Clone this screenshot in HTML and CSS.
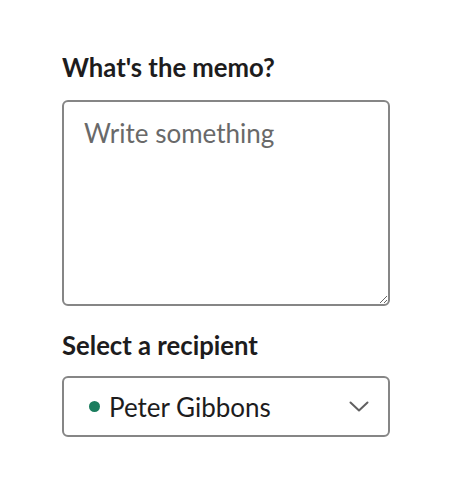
FILE: index.html
```html
<!DOCTYPE html>
<html lang="en">
<head>
<meta charset="utf-8">
<title>Memo</title>
<link rel="stylesheet" href="styles.css">
</head>
<body>
<main class="form">
  <label class="label" for="memo">What's the memo?</label>
  <textarea id="memo" class="memo" placeholder="Write something"></textarea>
  <div class="label label-second">Select a recipient</div>
  <div class="select">
    <span class="dot"></span>
    <span class="name">Peter Gibbons</span>
    <svg class="chevron" width="20" height="12" viewBox="0 0 20 12" aria-hidden="true"><path d="M1.5 1.5 L10 9.5 L18.5 1.5" fill="none" stroke="#616061" stroke-width="2" stroke-linecap="round" stroke-linejoin="round"/></svg>
  </div>
</main>
</body>
</html>
```

FILE: styles.css
```css
html, body {
  margin: 0;
  padding: 0;
  background: #ffffff;
}
body {
  font-family: Lato, "Noto Sans", sans-serif;
  color: #1d1c1d;
}
.form {
  display: flex;
  flex-direction: column;
  width: 328px;
  padding: 50px 0 0 62px;
}
.label {
  font-weight: 700;
  font-size: 25.7px;
  line-height: 34px;
  margin-bottom: 16px;
}
.label-second {
  margin-top: 22px;
  margin-bottom: 14px;
}
.memo {
  box-sizing: border-box;
  width: 328px;
  height: 206px;
  margin: 0;
  border: 2px solid #868686;
  border-radius: 6px;
  padding: 14px 20px;
  font-family: Lato, "Noto Sans", sans-serif;
  font-size: 26px;
  line-height: 34px;
  color: #1d1c1d;
  resize: vertical;
  outline: none;
}
.memo::placeholder {
  color: #696969;
  opacity: 1;
}
.select {
  box-sizing: border-box;
  width: 328px;
  height: 61px;
  border: 2px solid #868686;
  border-radius: 6px;
  display: flex;
  align-items: center;
  padding: 0 19px 0 25px;
  font-size: 26px;
}
.dot {
  width: 11px;
  height: 11px;
  border-radius: 50%;
  background: #1b7d5e;
  margin-right: 9px;
}
.name {
  flex: 1;
}
.chevron {
  display: block;
}
```
